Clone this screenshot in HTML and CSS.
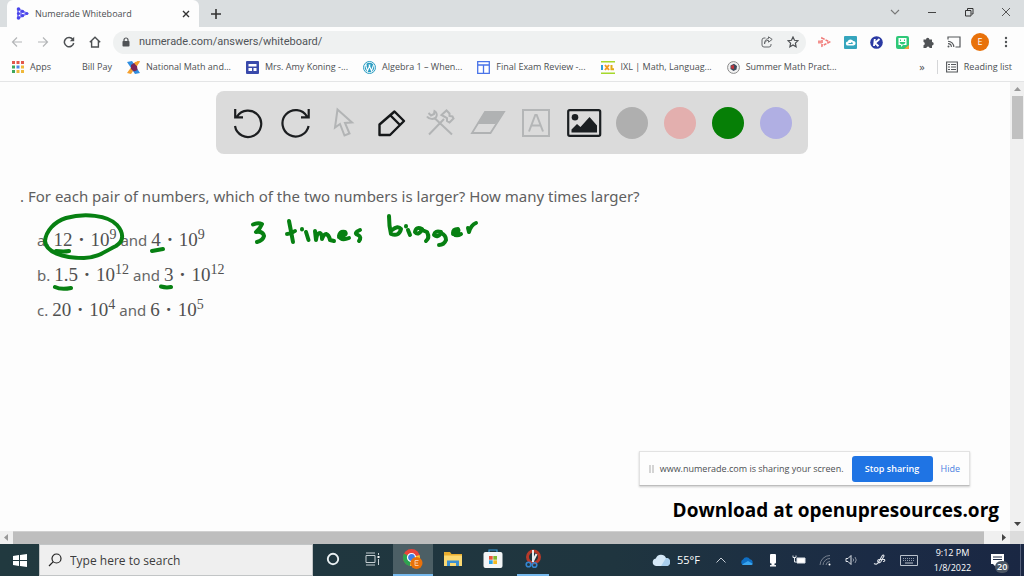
FILE: index.html
```html
<!DOCTYPE html>
<html lang="en">
<head>
<meta charset="utf-8">
<title>Numerade Whiteboard</title>
<link rel="stylesheet" href="styles.css">
</head>
<body>
<header class="browser">
  <div class="tabstrip">
    <div class="tab">
      <svg class="tab-icon" viewBox="0 0 13 13"><path d="M2 2v9M2 2l9 4.500L2 11M5 4v5" fill="none" stroke="#8a86f5" stroke-width="2"/><g fill="#4a45ea"><circle cx="2.500" cy="2" r="1.800"/><circle cx="2.500" cy="6.500" r="1.600"/><circle cx="2.500" cy="11" r="1.800"/><circle cx="6.500" cy="4.300" r="1.600"/><circle cx="6.500" cy="8.700" r="1.600"/><circle cx="10.800" cy="6.500" r="1.600"/></g></svg>
      <span class="tab-title">Numerade Whiteboard</span>
      <button class="icon-btn tab-close" aria-label="Close tab"><svg width="8" height="8" viewBox="0 0 8 8"><path d="M1 1l6 6M7 1L1 7" stroke="#333" stroke-width="1.400"/></svg></button>
    </div>
    <button class="icon-btn new-tab" aria-label="New tab"><svg width="10" height="10" viewBox="0 0 10 10"><path d="M5 0v10M0 5h10" stroke="#333" stroke-width="1.600"/></svg></button>
    <div class="window-controls">
      <button class="icon-btn" aria-label="Search tabs"><svg width="10" height="10" viewBox="0 0 10 10"><path d="M1 3l4 4 4-4" fill="none" stroke="#777" stroke-width="1.100"/></svg></button>
      <button class="icon-btn" aria-label="Minimize"><svg width="10" height="10" viewBox="0 0 10 10"><path d="M1 5.500h8" stroke="#444"/></svg></button>
      <button class="icon-btn" aria-label="Restore"><svg width="10" height="10" viewBox="0 0 10 10"><path d="M1.500 3.500h5.500v5.500H1.500zM3.500 3V1.500H9V7H7.500" fill="none" stroke="#333"/></svg></button>
      <button class="icon-btn" aria-label="Close"><svg width="10" height="10" viewBox="0 0 10 10"><path d="M1 1l8 8M9 1L1 9" stroke="#555"/></svg></button>
    </div>
  </div>

  <div class="navbar">
    <div class="nav-buttons">
      <button class="icon-btn" aria-label="Back"><svg width="12" height="12" viewBox="0 0 12 12"><path d="M11 6H1.500M6 1.500L1.500 6 6 10.500" fill="none" stroke="#b4b6b8" stroke-width="1.200"/></svg></button>
      <button class="icon-btn" aria-label="Forward"><svg width="12" height="12" viewBox="0 0 12 12"><path d="M1 6h9.500M6 1.500L10.500 6 6 10.500" fill="none" stroke="#b4b6b8" stroke-width="1.200"/></svg></button>
      <button class="icon-btn" aria-label="Reload"><svg width="12" height="12" viewBox="0 0 12 12"><path d="M9.800 3.200A4.700 4.700 0 1 0 10.700 7" fill="none" stroke="#4d5053" stroke-width="1.500"/><path d="M11.200.800v4.400H6.800z" fill="#4d5053"/></svg></button>
      <button class="icon-btn" aria-label="Home"><svg width="12" height="12" viewBox="0 0 12 12"><path d="M.800 6.300L6 1.200l5.200 5.100M2.600 5v6h6.800V5" fill="none" stroke="#4d5053" stroke-width="1.400"/></svg></button>
    </div>
    <div class="omnibox">
      <svg width="8" height="10" viewBox="0 0 8 10"><rect x=".500" y="4" width="7" height="5.500" rx=".800" fill="#505356"/><path d="M2 4.500V3a2 2 0 0 1 4 0v1.500" fill="none" stroke="#505356" stroke-width="1.200"/></svg>
      <input class="url" type="text" aria-label="Address" value="numerade.com/answers/whiteboard/">
      <button class="icon-btn" aria-label="Share"><svg width="12" height="12" viewBox="0 0 12 12"><path d="M4.500 2H3Q1 2 1 4v5q0 2 2 2h5q2 0 2-2V8M3.500 8c.300-2.500 1.800-3.600 4-3.700V6.200L11.200 3.400 7.500.800v1.700Q3.500 3 3.500 8" fill="none" stroke="#66696c"/></svg></button>
      <button class="icon-btn" aria-label="Bookmark this tab"><svg width="12" height="12" viewBox="0 0 12 12"><path d="M6 1l1.500 3.300 3.500.400-2.600 2.400.700 3.600L6 8.900 2.900 10.700l.700-3.600L1 4.700l3.500-.400z" fill="none" stroke="#4d5053" stroke-width="1.200"/></svg></button>
    </div>
    <div class="extensions">
      <button class="icon-btn" aria-label="Screencastify"><svg width="14" height="12" viewBox="0 0 14 12"><path d="M5 2l7.500 4L5 10z" fill="none" stroke="#f07a78" stroke-width="1.600" stroke-dasharray="3 1"/><path d="M1 4.500h4v3H1z" fill="#f3928f"/></svg></button>
      <button class="icon-btn" aria-label="Cloud extension"><svg width="13" height="13" viewBox="0 0 13 13"><rect width="13" height="13" rx="1" fill="#35a5bd"/><path d="M4 9.500a2 2 0 0 1-.300-4A3 3 0 0 1 9.200 5a2.200 2.200 0 0 1 .300 4.500z" fill="#fff"/><path d="M4.500 7.500h4l-1-1.500" stroke="#35a5bd" fill="none"/></svg></button>
      <button class="icon-btn" aria-label="Kami"><svg width="13" height="13" viewBox="0 0 13 13"><circle cx="6.500" cy="6.500" r="6.300" fill="#2b3aa3"/><path d="M4.800 3L4 10M9.500 3L5 7l3.500 3.200" fill="none" stroke="#fff" stroke-width="1.900"/></svg></button>
      <button class="icon-btn" aria-label="Bitmoji"><svg width="13" height="13" viewBox="0 0 13 13"><rect width="13" height="13" rx="2" fill="#2fc878"/><path d="M2.500 2h8v7H7l-2 2V9H2.500z" fill="#fff"/><path d="M4.500 3.500v1.500M8.500 3.500v1.500M4 6.500h5c-.500 2-4.500 2-5 0z" stroke="#2fc878" fill="#2fc878"/><path d="M8 13l5-4v4z" fill="#f2a23a"/></svg></button>
      <button class="icon-btn" aria-label="Extensions"><svg width="13" height="13" viewBox="0 0 13 13"><path d="M1.500 3.500H4a1.700 1.700 0 1 1 3.400 0H10V6a1.700 1.700 0 1 1 0 3.400V12H7.600a1.600 1.600 0 0 0-3.200 0H1.500V9.300a1.700 1.700 0 0 0 0-3.300z" fill="#505356"/></svg></button>
      <button class="icon-btn" aria-label="Cast"><svg width="14" height="12" viewBox="0 0 14 12"><path d="M1 3.500V1h12v10H8.500" fill="none" stroke="#55585b" stroke-width="1.200"/><path d="M1 5.200A5.800 5.800 0 0 1 6.800 11M1 7.600A3.400 3.400 0 0 1 4.400 11" fill="none" stroke="#55585b" stroke-width="1.100"/><circle cx="1.500" cy="10.500" r="1" fill="#55585b"/></svg></button>
      <button class="icon-btn avatar" aria-label="Profile">E</button>
      <button class="icon-btn menu" aria-label="Menu"><svg width="4" height="12" viewBox="0 0 4 12"><g fill="#505356"><circle cx="2" cy="2" r="1.200"/><circle cx="2" cy="6" r="1.200"/><circle cx="2" cy="10" r="1.200"/></g></svg></button>
    </div>
  </div>

  <nav class="bookmarks" aria-label="Bookmarks">
    <a class="bookmark apps" href="#"><svg width="12" height="12" viewBox="0 0 12 12"><path d="M0 0h3v3H0zM4.500 0h3v3h-3zM9 0h3v3H9z" fill="#e2574c"/><path d="M0 4.500h3v3H0z" fill="#3fa65c"/><path d="M4.500 4.500h3v3h-3z" fill="#4a86e8"/><path d="M9 4.500h3v3H9z" fill="#efb83a"/><path d="M0 9h3v3H0z" fill="#3fa65c"/><path d="M4.500 9h3v3h-3zM9 9h3v3H9z" fill="#efb83a"/></svg><span>Apps</span></a>
    <a class="bookmark" href="#"><span>Bill Pay</span></a>
    <a class="bookmark" href="#"><svg width="13" height="13" viewBox="0 0 13 13"><path d="M13 0L8 1 0 12l4 1z" fill="#f6a02d"/><path d="M0 1l5-1 8 12-5 1z" fill="#2f8de0"/><path d="M4 4l3-2 3 3 .500 4L7 10.500 4 8z" fill="#7a2555"/><path d="M8 3l2.500-3L13 .500 10 5z" fill="#f6a02d"/></svg><span>National Math and...</span></a>
    <a class="bookmark" href="#"><svg width="13" height="13" viewBox="0 0 13 13"><rect width="13" height="13" rx="1" fill="#3949ab"/><path d="M2.500 3h8v2.500h-8zM2.500 7H6v3H2.500zM7.500 7h3v3h-3z" fill="#fff"/></svg><span>Mrs. Amy Koning -...</span></a>
    <a class="bookmark" href="#"><svg width="13" height="13" viewBox="0 0 13 13"><circle cx="6.500" cy="6.500" r="6" fill="#fff" stroke="#2b9dc2"/><circle cx="6.500" cy="6.500" r="4.800" fill="#2b9dc2"/><path d="M2.500 4l2 6L6.500 5l2 5 2-6M2 4h2M5.500 4h2" fill="none" stroke="#fff" stroke-width="1.100"/></svg><span>Algebra 1 – When...</span></a>
    <a class="bookmark" href="#"><svg width="13" height="13" viewBox="0 0 13 13"><path d="M.700.700h11.600v11.600H.700zM.700 4h11.600M6.500 4v8" fill="#fff" stroke="#4a74e8" stroke-width="1.300"/></svg><span>Final Exam Review -...</span></a>
    <a class="bookmark" href="#"><svg width="14" height="13" viewBox="0 0 14 13"><path d="M0 .800h14M0 12.200h14" stroke="#a6d82b" stroke-width="1.500"/><path d="M1 4v5" stroke="#2f9cd8" stroke-width="2"/><path d="M4 4l4 5M8 4L4 9" stroke="#f39a23" stroke-width="2"/><path d="M10.500 4v4.200H13" fill="none" stroke="#e2ac18" stroke-width="2"/></svg><span>IXL | Math, Languag...</span></a>
    <a class="bookmark" href="#"><svg width="13" height="13" viewBox="0 0 13 13"><circle cx="6.500" cy="6.500" r="5.900" fill="#f2f2f2" stroke="#8b8b8b"/><path d="M3.500 4.500L7 2.800l3 2.200-.500 3.500L6.500 10 3.500 8z" fill="#3f4a5c"/><path d="M4 4.800l3-.800v4L4.300 7.500z" fill="#c3343b"/></svg><span>Summer Math Pract...</span></a>
    <div class="bookmarks-end">
      <button class="icon-btn more" aria-label="More bookmarks">»</button>
      <a class="bookmark reading" href="#"><svg width="12" height="12" viewBox="0 0 12 12"><path d="M.600 1h10.800v10H.600z" fill="none" stroke="#55585b" stroke-width="1.100"/><path d="M2 3.500h2M2 6h2M2 8.500h2M5 3.500h5M5 6h5M5 8.500h5" stroke="#55585b"/></svg><span>Reading list</span></a>
    </div>
  </nav>
</header>

<main class="viewport">
  <section class="page">
    <div class="toolbar-row">
      <div class="toolbar" role="toolbar" aria-label="Whiteboard tools">
        <button class="tool" aria-label="Undo"><svg width="32" height="32" viewBox="0 0 32 32"><path d="M3 19A13.200 13.200 0 1 0 5 9.500M3.200 2v8.300H11" fill="none" stroke="#1c1e20" stroke-width="2.200"/></svg></button>
        <button class="tool" aria-label="Redo"><svg width="32" height="32" viewBox="0 0 32 32"><path d="M28.600 19A13.200 13.200 0 1 1 27 9.500M28.700 2v8.300H21" fill="none" stroke="#1c1e20" stroke-width="2.200"/></svg></button>
        <button class="tool" aria-label="Select"><svg width="32" height="32" viewBox="0 0 32 32"><path d="M9.500 2.500L7 20.500l5-3.500 4.500 11.500 5-2-4.500-10.500 7-.500z" fill="none" stroke="#b2b4b5" stroke-width="2"/></svg></button>
        <button class="tool" aria-label="Pen"><svg width="32" height="32" viewBox="0 0 32 32"><path d="M18.500 4.500l9.500 9.500L14 28H3.500V17.500zM14.500 8.500l9.500 9.500" fill="none" stroke="#151719" stroke-width="2.400" stroke-linejoin="round"/></svg></button>
        <button class="tool" aria-label="Tools"><svg width="32" height="32" viewBox="0 0 32 32"><path d="M5 27.500L20 12M28 27.500L11 11.500M3 9.500c2 3 7 3 8.800 1 1.700-2 1.200-5-1.300-6.500l-.500 3-3 1.500L4.500 6M17.500 8l5-4.500 3 3v2.500l3 .500 1 2-4 4-2.500-1.500V11z" fill="none" stroke="#b2b4b5" stroke-width="2"/></svg></button>
        <button class="tool" aria-label="Eraser"><svg width="36" height="32" viewBox="0 0 36 32"><path d="M15 4.500h19.500L25.500 17H7z" fill="#b0b2b3"/><path d="M15 5h19L20.500 26H2z" fill="none" stroke="#b0b2b3" stroke-width="1.800"/></svg></button>
        <button class="tool" aria-label="Text"><svg width="32" height="32" viewBox="0 0 32 32"><path d="M3 3h26v26H3zM9 24.500L15.300 8h1.400L23 24.500M11.500 18.500h9" fill="none" stroke="#b4b6b7" stroke-width="2"/></svg></button>
        <button class="tool" aria-label="Image"><svg width="36" height="32" viewBox="0 0 36 32"><rect x="2.200" y="3.200" width="32" height="25.600" rx="1.500" fill="none" stroke="#1b1f22" stroke-width="2.200"/><circle cx="9" cy="10.200" r="3.300" fill="#1b1f22"/><path d="M5.500 25.500v-3l5.500-5.500 3.500 3 9-10 7.500 8.500v7z" fill="#1b1f22"/></svg></button>
        <button class="tool" aria-label="Gray"><span class="swatch gray"></span></button>
        <button class="tool" aria-label="Red"><span class="swatch red"></span></button>
        <button class="tool" aria-label="Green"><span class="swatch green"></span></button>
        <button class="tool" aria-label="Purple"><span class="swatch purple"></span></button>
      </div>
    </div>

    <div class="board">
      <p class="question">. For each pair of numbers, which of the two numbers is larger? How many times larger?</p>
      <div class="pairs">
        <p class="pair"><span class="letter">a.</span><span class="num">12</span><span class="dot">·</span><span class="num">10<sup>9</sup></span><span class="and">and</span><span class="num">4</span><span class="dot">·</span><span class="num">10<sup>9</sup></span></p>
        <p class="pair"><span class="letter">b.</span><span class="num">1.5</span><span class="dot">·</span><span class="num">10<sup>12</sup></span><span class="and">and</span><span class="num">3</span><span class="dot">·</span><span class="num">10<sup>12</sup></span></p>
        <p class="pair"><span class="letter">c.</span><span class="num">20</span><span class="dot">·</span><span class="num">10<sup>4</sup></span><span class="and">and</span><span class="num">6</span><span class="dot">·</span><span class="num">10<sup>5</sup></span></p>
      </div>
      <svg class="ink" width="500" height="100" viewBox="0 200 500 100" role="img" aria-label="3 times bigger">
        <g fill="none" stroke="#078012" stroke-width="4" stroke-linecap="round" stroke-linejoin="round">
          <path d="M66 218C54 222 46 231 45 241C46 252 62 258 84 258C98 258 107 250 116 246C124 241 124 233 117 225C108 215 84 213 66 218"/>
          <path d="M56 251q8 1 13 0M152 251l11-2M55 287q6 3 16 1M161 286.500q5 1.500 10 .500"/>
          <path d="M253 224.500q5-2 9-.500-2 5-6 8 7-1 8 4-1 4.500-7 6"/>
          <path d="M289 221q2 10 4 21M287 234q4 0 8-3M302 229v.500M306 232l2.500 8M315 231l1 9q1-7 4-7 2 1 2 6 2-5 4-5 3 1 4 6l4 1M339 237q9-2 6-5-5-1-6 4 2 5 10 2M360 230q-7 3-2 5 4 2 1 6"/>
          <path d="M389 216q0 10 2 18 8 3 10-5-3-4-9 1M406 226v.500M408 230l2 5M422 229q-6-3-7 3 3 4 7-2l5 2q3 6-1 9M441 232q-6-2-7 3 4 3 7-2 5 2 5 7-2 5-7 5M453 234q7-2 5-5-5 0-5 4 3 4 8 1M468 228l1 4q2-7 7-9"/>
        </g>
      </svg>
    </div>

    <div class="share-bar">
      <span class="grip"></span>
      <span class="share-text">www.numerade.com is sharing your screen.</span>
      <button class="stop">Stop sharing</button>
      <a class="hide" href="#">Hide</a>
    </div>
    <p class="watermark">Download at openupresources.org</p>
  </section>

  <div class="scroll-v">
    <svg width="7" height="4" viewBox="0 0 7 4"><path d="M3.500 0L7 4H0z" fill="#999"/></svg>
    <span class="thumb-v"></span>
    <svg class="arrow-end" width="7" height="4" viewBox="0 0 7 4"><path d="M3.500 4L7 0H0z" fill="#444"/></svg>
  </div>
  <div class="scroll-h">
    <svg width="4" height="7" viewBox="0 0 4 7"><path d="M0 3.500L4 0v7z" fill="#999"/></svg>
    <span class="thumb-h"></span>
    <svg width="4" height="7" viewBox="0 0 4 7"><path d="M4 3.500L0 0v7z" fill="#444"/></svg>
  </div>
  <div class="corner"></div>
</main>

<footer class="taskbar">
  <button class="start" aria-label="Start"><svg width="14" height="13" viewBox="0 0 14 13"><path d="M0 2l6-.900V6H0zM7 1l7-1v6H7zM0 7h6v4.900L0 11zM7 7h7v6l-7-1z" fill="#fff"/></svg></button>
  <label class="search">
    <svg width="14" height="14" viewBox="0 0 14 14"><circle cx="8.500" cy="5.500" r="4.500" fill="none" stroke="#222" stroke-width="1.200"/><path d="M5.300 8.700L1 13" stroke="#222" stroke-width="1.200"/></svg>
    <input type="text" aria-label="Search" placeholder="Type here to search">
  </label>
  <div class="apps-row">
    <button class="app" aria-label="Cortana"><svg width="14" height="14" viewBox="0 0 14 14"><circle cx="7" cy="7" r="5.200" fill="none" stroke="#e9f0f2" stroke-width="1.900"/></svg></button>
    <button class="app" aria-label="Task view"><svg width="16" height="14" viewBox="0 0 16 14"><path d="M1 1h9M1 13h9M1 3.500h9v7H1zM13.500 1v2M13.500 7v6" fill="none" stroke="#c5ced2"/><path d="M12.500 4h2v2h-2z" fill="#fff"/></svg></button>
    <button class="app active" aria-label="Chrome"><svg width="22" height="22" viewBox="0 0 22 22"><circle cx="9.500" cy="9.500" r="8.500" fill="#e9453b"/><path d="M9.500 9.500L2 5.500A8.500 8.500 0 0 0 8 18z" fill="#2da350"/><path d="M9.500 9.500L8 18A8.500 8.500 0 0 0 17.500 7z" fill="#f8c630"/><circle cx="9.500" cy="9.500" r="4" fill="#3f7ee8" stroke="#fff" stroke-width="1.200"/><circle cx="14.500" cy="15" r="6" fill="#e8710a"/><path d="M16.500 12.500h-3.500v5h3.500M13 15h3" fill="none" stroke="#f9c9a0"/></svg></button>
    <button class="app" aria-label="File Explorer"><svg width="18" height="16" viewBox="0 0 18 16"><path d="M0 1h6l1.500 2H18v12H0z" fill="#e9ad2f"/><path d="M0 4.500h18V15H0z" fill="#fbd972"/><path d="M3 15V9.500h12V15h-3v-3H6v3z" fill="#3b8fd0"/></svg></button>
    <button class="app" aria-label="Microsoft Store"><svg width="20" height="20" viewBox="0 0 20 20"><path d="M6 4V1h8v3" fill="none" stroke="#3a9ad8" stroke-width="1.200"/><rect x=".500" y="3" width="19" height="16" rx="2" fill="#f3f5f6"/><path d="M6 7h3.700v3.700H6z" fill="#e8523a"/><path d="M10.300 7H14v3.700h-3.700z" fill="#7fb92f"/><path d="M6 11.300h3.700V15H6z" fill="#2ba3e3"/><path d="M10.300 11.300H14V15h-3.700z" fill="#f5b91f"/></svg></button>
    <button class="app" aria-label="Snipping Tool"><svg width="18" height="20" viewBox="0 0 18 20"><circle cx="9.500" cy="8" r="6" fill="none" stroke="#b83a2a" stroke-width="3"/><path d="M9 1v12M12.500 5l-4 8" stroke="#e8edf0" stroke-width="2"/><circle cx="4.500" cy="15.500" r="2.300" fill="none" stroke="#3585cf" stroke-width="1.600"/><circle cx="10.500" cy="16" r="2.300" fill="none" stroke="#3585cf" stroke-width="1.600"/></svg><span class="open-mark"></span></button>
  </div>
  <div class="tray">
    <button class="weather"><svg width="18" height="14" viewBox="0 0 18 14"><path d="M4 13a3.800 3.800 0 0 1-.200-7.500A5.500 5.500 0 0 1 14 5a4 4 0 0 1 0 8z" fill="#d5e8f7"/><path d="M9 13l5-8a4 4 0 0 1 0 8z" fill="#a9cfee"/></svg><span>55°F</span></button>
    <button class="tray-btn" aria-label="Show hidden icons"><svg width="10" height="6" viewBox="0 0 10 6"><path d="M.500 5.500L5 1l4.500 4.500" fill="none" stroke="#c9d0d8"/></svg></button>
    <button class="tray-btn" aria-label="OneDrive"><svg width="14" height="9" viewBox="0 0 14 9"><path d="M3 9a3 3 0 0 1 0-5.500A4 4 0 0 1 10 3.300 3 3 0 0 1 11 9z" fill="#0f6fc4"/><path d="M2 8.500L8 5l5 3-1.500 1H3z" fill="#39a5ee"/></svg></button>
    <button class="tray-btn" aria-label="Microphone"><svg width="8" height="13" viewBox="0 0 8 13"><rect x="1" width="6" height="9.500" rx="1" fill="#fff"/><path d="M1 11.800h6" stroke="#fff" stroke-width="1.400"/><path d="M4 9v2.500" stroke="#fff" stroke-width="3"/></svg></button>
    <button class="tray-btn" aria-label="Battery"><svg width="14" height="10" viewBox="0 0 14 10"><path d="M5 3h8v5H5z" fill="#fff" stroke="#dfe4ea"/><path d="M1 .500v2h3v-2M2.500 3v4h2" fill="none" stroke="#dfe4ea"/></svg></button>
    <button class="tray-btn" aria-label="Network"><svg width="12" height="12" viewBox="0 0 12 12"><path d="M1 11A10 10 0 0 1 11 1.500M4 11a7 7 0 0 1 7-6.500M7 11a4 4 0 0 1 4-3.500" fill="none" stroke="#77818f"/><circle cx="10.500" cy="10.500" r="1" fill="#fff"/></svg></button>
    <button class="tray-btn" aria-label="Volume"><svg width="13" height="12" viewBox="0 0 13 12"><path d="M1 4.500h2L6 1.500v9L3 7.500H1z" fill="none" stroke="#e0e4ea"/><path d="M8 4.500q1.300 1.500 0 3M10 3q2.500 3 0 6" fill="none" stroke="#8b94a3"/></svg></button>
    <button class="tray-btn wide" aria-label="Pen"><svg width="13" height="12" viewBox="0 0 13 12"><path d="M1 9.500q3 2 5-2L9 2q1.500-2 2 0L8 7.500q-1.500 2-3 .500-1-2 1-2.500h5.500q1 2-1.500 2" fill="none" stroke="#e0e4ea" stroke-width="1.100"/></svg></button>
    <button class="tray-btn wide" aria-label="Touch keyboard"><svg width="18" height="11" viewBox="0 0 18 11"><path d="M.500.500h17v10H.500z" fill="none" stroke="#b9c1cc"/><path d="M3 3.500h12M3 5.500h12" stroke="#8e98a8" stroke-dasharray="1 1"/><path d="M5 8h8" stroke="#b9c1cc"/></svg></button>
    <button class="clock"><span>9:12 PM</span><span>1/8/2022</span></button>
    <button class="notify" aria-label="20 notifications"><svg width="14" height="13" viewBox="0 0 14 13"><path d="M0 0h13v10H5v3l-3-3H0z" fill="#fff"/><path d="M2 3h9M2 5.500h9" stroke="#1c2a45"/></svg><span class="badge">20</span></button>
  </div>
</footer>
</body>
</html>
```
FILE: styles.css
```css
* { box-sizing: border-box; }

body {
  margin: 0;
  height: 100vh;
  display: flex;
  flex-direction: column;
  overflow: hidden;
  background: #fdfdfd;
  color: #4c4f52;
  font-family: "Open Sans", "Noto Sans", sans-serif;
  font-size: 9px;
  line-height: 12px;
}

p { margin: 0; }

a {
  color: inherit;
  text-decoration: none;
}

svg {
  display: block;
  flex: none;
}

button,
input {
  margin: 0;
  padding: 0;
  border: 0;
  background: none;
  color: inherit;
  font: inherit;
}

.icon-btn {
  display: flex;
  align-items: center;
  justify-content: center;
  flex: none;
}

/* Tab strip */
.tabstrip {
  display: flex;
  align-items: center;
  height: 27px;
  padding-left: 7px;
  background: #dadee0;
}

.tab {
  display: flex;
  align-items: center;
  align-self: stretch;
  gap: 6px;
  width: 192px;
  padding: 0 9px;
  border-radius: 6px 6px 0 0;
  background: #fdfdfd;
}

.tab-icon {
  width: 13px;
  height: 13px;
}

.tab-title { flex: 1; }

.new-tab {
  width: 20px;
  height: 20px;
  margin-left: 7px;
}

.window-controls {
  display: flex;
  align-self: flex-start;
  margin-left: auto;
}

.window-controls .icon-btn {
  width: 37px;
  height: 24px;
}

/* Navigation bar */
.navbar {
  display: flex;
  align-items: center;
  height: 30px;
  padding: 0 5px 0 4px;
}

.nav-buttons {
  display: flex;
  padding-right: 5px;
}

.nav-buttons .icon-btn {
  width: 26px;
  height: 24px;
}

.omnibox {
  display: flex;
  flex: 1;
  align-items: center;
  gap: 14px;
  height: 23px;
  padding: 0 7px 0 9px;
  border-radius: 12px;
  background: #eff1f1;
}

.url {
  flex: 1;
  min-width: 0;
  margin-left: -5px;
  color: #505458;
  font-family: Roboto, "Open Sans", sans-serif;
  font-size: 11px;
}

.extensions {
  display: flex;
  align-items: center;
  padding-left: 5px;
}

.extensions .icon-btn {
  width: 26px;
  height: 24px;
}

.extensions .avatar {
  width: 18px;
  height: 18px;
  margin: 0 4px;
  border-radius: 50%;
  background: #e8710a;
  color: #fff;
}

.extensions .menu { width: 26px; }

/* Bookmarks bar */
.bookmarks {
  display: flex;
  align-items: center;
  gap: 15px;
  height: 25px;
  padding: 0 12px 4px;
  border-bottom: 1px solid #e4e5e6;
  overflow: hidden;
  white-space: nowrap;
}

.bookmark {
  display: flex;
  align-items: center;
  gap: 6px;
}

.apps { margin-right: 16px; }

.bookmarks-end {
  display: flex;
  align-items: center;
  gap: 12px;
  margin-left: auto;
}

.more {
  font-size: 11px;
}

.reading {
  height: 14px;
  padding-left: 8px;
  border-left: 1px solid #d5d6d8;
}

/* Page and scrollbars */
.viewport {
  flex: 1;
  min-height: 0;
  display: grid;
  grid-template-columns: minmax(0, 1fr) 14px;
  grid-template-rows: minmax(0, 1fr) 13px;
}

.page {
  position: relative;
  overflow: hidden;
  padding-top: 9px;
}

/* Centers the toolbar on the window, scrollbar included */
.toolbar-row {
  display: flex;
  justify-content: center;
  padding-left: 14px;
}

.toolbar {
  display: flex;
  align-items: center;
  padding: 8px;
  border-radius: 8px;
  background: #dbdbdb;
}

.tool {
  display: flex;
  align-items: center;
  justify-content: center;
  width: 48px;
  height: 47px;
}

.swatch {
  width: 32px;
  height: 32px;
  border-radius: 50%;
}

.gray { background: #afafaf; }
.red { background: #e3afae; }
.green { background: #067f06; }
.purple { background: #b0afe3; }

.board {
  position: relative;
  padding-top: 30px;
}

.question {
  padding-left: 20px;
  color: #606060;
  font-family: "Noto Sans", sans-serif;
  font-size: 15px;
  line-height: 24px;
}

.pairs { padding: 14px 0 0 37px; }

.pair {
  display: flex;
  align-items: baseline;
  height: 35px;
  color: #666;
  font-family: "Noto Sans", sans-serif;
  font-size: 15px;
  line-height: 35px;
}

.letter { margin-right: 4px; }

.num,
.dot {
  color: #505050;
  font-family: "Liberation Serif", serif;
  font-size: 19px;
}

.dot {
  width: 18px;
  text-align: center;
  font-weight: 700;
}

.num sup {
  font-size: 14px;
  line-height: 0;
}

.and { margin: 0 4px; }

.ink {
  position: absolute;
  left: 0;
  top: 46px;
}

/* Screen sharing notice */
.share-bar {
  position: absolute;
  right: 40px;
  bottom: 45px;
  display: flex;
  align-items: center;
  height: 35px;
  padding: 0 9px;
  border: 1px solid #e2e2e2;
  border-bottom-color: #bdbdbd;
  background: #fdfdfd;
  box-shadow: 0 1px 2px #ccc;
}

.grip {
  width: 5px;
  height: 8px;
  margin-right: 6px;
  border: solid #d4d4d4;
  border-width: 0 2px;
}

.stop {
  width: 81px;
  height: 26px;
  margin: 0 8px;
  border-radius: 3px;
  background: #1f74e4;
  color: #fff;
  font-weight: 600;
}

.hide { color: #4a80e0; }

.watermark {
  position: absolute;
  right: 11px;
  bottom: 8px;
  color: #000;
  font-size: 19px;
  font-weight: 700;
  line-height: 26px;
}

.scroll-v {
  display: flex;
  flex-direction: column;
  align-items: center;
  gap: 5px;
  padding: 5px 0;
  background: #f0f0f0;
}

.thumb-v {
  width: 11px;
  height: 43px;
  background: #c1c1c1;
}

.arrow-end { margin-top: auto; }

.scroll-h {
  display: flex;
  align-items: center;
  gap: 5px;
  padding: 0 4px;
  background: #f0f0f0;
}

.thumb-h {
  flex: 1;
  align-self: stretch;
  margin-right: 13px;
  border-top: 1px solid #d0d0d0;
  background: #bebebe;
}

.corner { background: #dcdcdc; }

/* Taskbar */
.taskbar {
  display: flex;
  height: 32px;
  background: linear-gradient(90deg, #21393f, #1f353f 60%, #1b2b45 85%, #1a2743);
  color: #fff;
}

.start {
  display: flex;
  align-items: center;
  justify-content: center;
  width: 39px;
}

.search {
  display: flex;
  align-items: center;
  gap: 8px;
  width: 274px;
  padding: 0 8px;
  border: 1px solid #c2c5c6;
  background: #efefef;
}

.search input {
  flex: 1;
  min-width: 0;
  padding-top: 2px;
  font-size: 12px;
  line-height: 18px;
}

.search input::placeholder {
  color: #3c3c3c;
  opacity: 1;
}

.apps-row { display: flex; }

.app {
  position: relative;
  display: flex;
  align-items: center;
  justify-content: center;
  width: 40px;
  border-bottom: 2px solid transparent;
}

.active {
  border-bottom-color: #76b9ed;
  background: #4c5f65;
}

.open-mark {
  position: absolute;
  right: 4px;
  bottom: -2px;
  left: 4px;
  height: 2px;
  background: #76b9ed;
}

.tray {
  display: flex;
  align-items: center;
  margin-left: auto;
  padding-right: 3px;
}

.weather {
  display: flex;
  align-items: center;
  gap: 7px;
  margin-right: 8px;
  font-size: 11px;
}

.tray-btn {
  display: flex;
  align-items: center;
  justify-content: center;
  width: 26px;
  height: 32px;
}

.wide { width: 30px; }

.clock {
  display: flex;
  flex-direction: column;
  align-items: center;
  gap: 3px;
  width: 57px;
}

.notify {
  position: relative;
  display: flex;
  align-items: center;
  align-self: stretch;
  width: 40px;
  padding-left: 10px;
  border-right: 1px solid #55607a;
}

.badge {
  position: absolute;
  left: 14px;
  bottom: 3px;
  padding: 0 2px;
  border-radius: 6px;
  background: #4a5563;
  color: #fff;
  font-weight: 600;
}
```
